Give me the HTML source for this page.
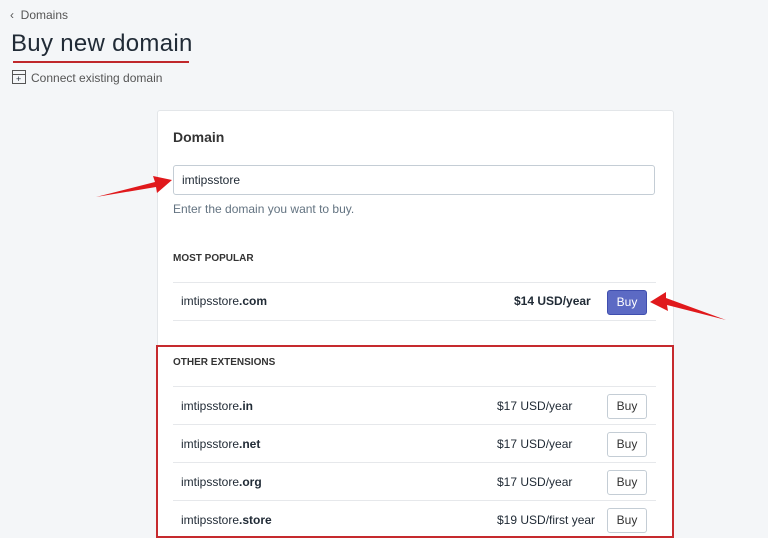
<!DOCTYPE html>
<html><head><style>
html,body{margin:0;width:768px;height:538px;overflow:hidden}
body{background:#f4f6f8;font-family:"Liberation Sans",sans-serif;color:#212b36;position:relative}
.a{position:absolute}
.card{left:157px;top:110px;width:515px;height:440px;background:#fff;border:1px solid #e3e6e9;border-radius:3px}
.line{left:173px;width:483px;height:1px;background:#e6e8eb}
.btn{left:607px;width:38px;height:23px;border:1px solid #c4cdd5;border-radius:3px;background:#fff;font-size:12px;text-align:center;line-height:23px;color:#333}
</style></head><body>
<div class="a" style="left:10px;top:8px;color:#555;font-size:12px">&#8249;&nbsp; Domains</div>
<div class="a" style="left:11px;top:30px;font-size:24px;color:#212b36;letter-spacing:0.3px">Buy new domain</div>
<div class="a" style="left:13px;top:61px;width:176px;height:2px;background:#c0282b"></div>
<div class="a" style="left:12px;top:70px;width:14px;height:14px;border:1px solid #555;box-sizing:border-box"><div class="a" style="left:0;top:3px;width:12px;height:1px;background:#555"></div><div class="a" style="left:3px;top:4px;font-size:9px;line-height:9px">+</div></div>
<div class="a" style="left:31px;top:71px;font-size:12px;color:#555">Connect existing domain</div>
<div class="a card"></div>
<div class="a" style="left:173px;top:129px;font-size:14px;font-weight:bold;color:#333">Domain</div>
<div class="a" style="left:173px;top:165px;width:482px;height:30px;border:1px solid #c4cdd5;border-radius:3px;box-sizing:border-box"></div>
<div class="a" style="left:182px;top:173px;font-size:12px">imtipsstore</div>
<div class="a" style="left:173px;top:202px;font-size:12px;color:#637381">Enter the domain you want to buy.</div>
<div class="a" style="left:173px;top:253px;font-size:10px;font-weight:bold;color:#333">MOST POPULAR</div>
<div class="a line" style="top:282px"></div>
<div class="a" style="left:181px;top:294px;font-size:12px">imtipsstore<b>.com</b></div>
<div class="a" style="left:514px;top:294px;font-size:12px;font-weight:bold">$14 USD/year</div>
<div class="a btn" style="top:290px;background:#5c6ac4;border-color:#3f4eae;color:#fff">Buy</div>
<div class="a line" style="top:320px"></div>
<div class="a" style="left:156px;top:345px;width:514px;height:189px;border:2px solid #c62a2e"></div>
<div class="a" style="left:173px;top:357px;font-size:10px;font-weight:bold;color:#333">OTHER EXTENSIONS</div>
<div class="a line" style="top:386px"></div>
<div class="a" style="left:181px;top:399px;font-size:12px">imtipsstore<b>.in</b></div>
<div class="a" style="left:497px;top:399px;font-size:12px">$17 USD/year</div>
<div class="a btn" style="top:394px">Buy</div>
<div class="a line" style="top:424px"></div>
<div class="a" style="left:181px;top:437px;font-size:12px">imtipsstore<b>.net</b></div>
<div class="a" style="left:497px;top:437px;font-size:12px">$17 USD/year</div>
<div class="a btn" style="top:432px">Buy</div>
<div class="a line" style="top:462px"></div>
<div class="a" style="left:181px;top:475px;font-size:12px">imtipsstore<b>.org</b></div>
<div class="a" style="left:497px;top:475px;font-size:12px">$17 USD/year</div>
<div class="a btn" style="top:470px">Buy</div>
<div class="a line" style="top:500px"></div>
<div class="a" style="left:181px;top:513px;font-size:12px">imtipsstore<b>.store</b></div>
<div class="a" style="left:497px;top:513px;font-size:12px">$19 USD/first year</div>
<div class="a btn" style="top:508px">Buy</div>
<svg class="a" style="left:0;top:0" width="768" height="538">
<polygon points="96,197 155,182 153,176 172,180 157,193 156,187" fill="#e0191c"/>
<polygon points="726,320 667,305 668,311 650,302 666,292 666,298" fill="#e0191c"/>
</svg>
</body></html>
